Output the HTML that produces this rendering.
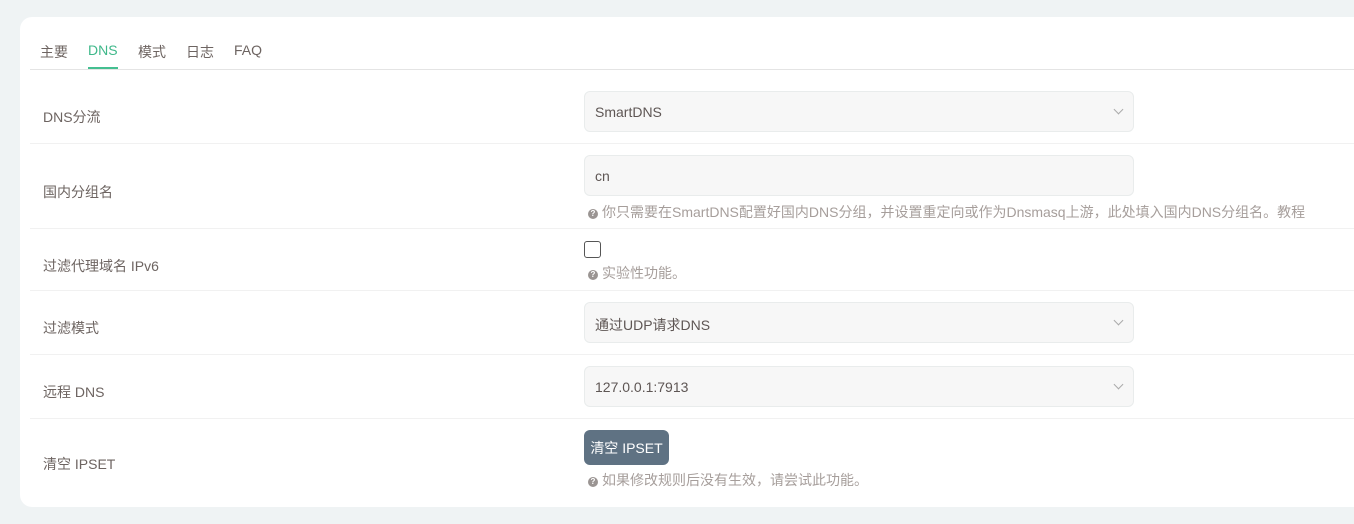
<!DOCTYPE html>
<html><head><meta charset="utf-8"><style>
body{margin:0;width:1354px;height:524px;background:#eff3f4;font-family:"Liberation Sans","Noto Sans CJK SC",sans-serif;color:#6d6461;font-size:14px;overflow:hidden;position:relative}
.card{position:absolute;left:20px;top:17px;width:1400px;height:490px;background:#fff;border-radius:12px}
.a{position:absolute}
.tab{position:absolute;top:42px;font-size:14px;color:#6d6461}
.line{position:absolute;left:30px;width:1330px;height:1px;background:#f1f1f1}
.lbl{position:absolute;left:43px;font-size:14px}
.sel{position:absolute;left:584px;width:548px;height:39px;border:1px solid #e9ecec;background:#f7f7f7;border-radius:6px;box-sizing:content-box}
.sel span{position:absolute;left:10px;top:12px;font-size:14px;color:#5e5654}
.sel i{position:absolute;right:11px;top:14px;width:6px;height:6px;border-right:1.3px solid #aaa;border-bottom:1.3px solid #aaa;transform:rotate(45deg)}
.help{position:absolute;left:588px;font-size:14px;color:#a69e9b;white-space:nowrap}
.help b{display:inline-block;width:10px;height:10px;border-radius:50%;background:#9a9492;color:#fff;font-size:8px;line-height:10px;text-align:center;margin-right:4px;vertical-align:1px}
</style></head><body>
<div class="card"></div>
<div class="tab" style="left:40px">主要</div>
<div class="tab" style="left:88px;color:#3fb88a">DNS</div>
<div class="a" style="left:88px;top:67px;width:30px;height:2px;background:#44bf91"></div>
<div class="tab" style="left:138px">模式</div>
<div class="tab" style="left:186px">日志</div>
<div class="tab" style="left:234px">FAQ</div>
<div class="a" style="left:30px;top:69px;width:1330px;height:1px;background:#e4e4e4"></div>

<div class="lbl" style="top:107px">DNS分流</div>
<div class="sel" style="top:91px"><span>SmartDNS</span><i></i></div>
<div class="line" style="top:143px"></div>

<div class="lbl" style="top:182px">国内分组名</div>
<div class="sel" style="top:155px"><span>cn</span></div>
<div class="help" style="top:202px"><b>?</b>你只需要在SmartDNS配置好国内DNS分组，并设置重定向或作为Dnsmasq上游，此处填入国内DNS分组名。教程</div>
<div class="line" style="top:228px"></div>

<div class="lbl" style="top:256px">过滤代理域名 IPv6</div>
<div class="a" style="left:584px;top:241px;width:15px;height:15px;border:1.3px solid #555;border-radius:3px"></div>
<div class="help" style="top:263px"><b>?</b>实验性功能。</div>
<div class="line" style="top:290px"></div>

<div class="lbl" style="top:318px">过滤模式</div>
<div class="sel" style="top:302px"><span>通过UDP请求DNS</span><i></i></div>
<div class="line" style="top:354px"></div>

<div class="lbl" style="top:382px">远程 DNS</div>
<div class="sel" style="top:366px"><span>127.0.0.1:7913</span><i></i></div>
<div class="line" style="top:418px"></div>

<div class="lbl" style="top:454px">清空 IPSET</div>
<div class="a" style="left:584px;top:430px;width:85px;height:35px;background:#5f7283;border-radius:6px;color:#fff;font-size:14px;line-height:36px;text-align:center">清空 IPSET</div>
<div class="help" style="top:470px"><b>?</b>如果修改规则后没有生效，请尝试此功能。</div>
</body></html>
